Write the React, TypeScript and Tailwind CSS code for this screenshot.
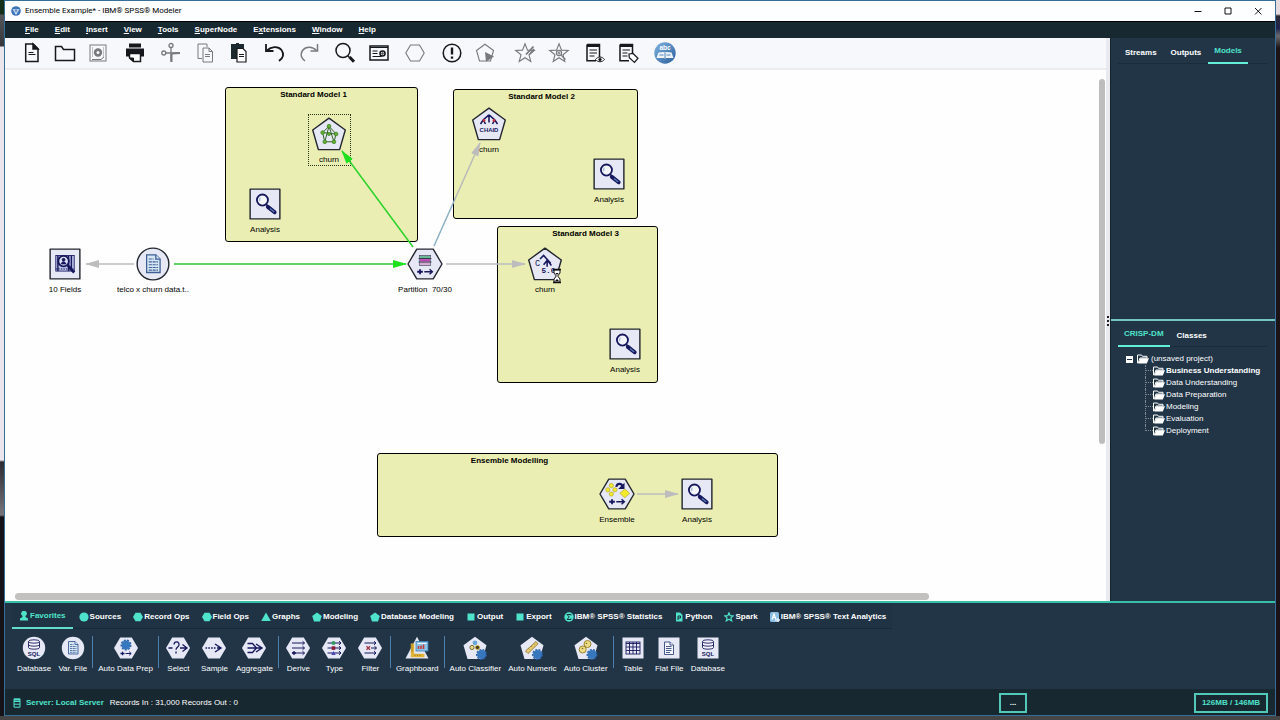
import React from "react";

type Kids = { children?: React.ReactNode };

/* ---------- toolbar icons ---------- */

function Tool({ children }: Kids) {
  return (
    <svg viewBox="0 0 24 24" className="size-6" fill="none" stroke="#15181c" strokeWidth="1.5">
      {children}
    </svg>
  );
}

const gray = "#77797d";
const star = "M12 2.8l2.5 6.3 6.8.4-5.3 4.2 1.8 6.8-5.8-3.8-5.8 3.8L8 13.7 2.700 9.500l6.800-.4z";

const tools: { name: string; gap: string; icon: React.ReactNode }[] = [
  {
    name: "New stream",
    gap: "ml-0",
    icon: (
      <Tool>
        <path d="M5.700 3h7.500l4.800 4.800V20.500H5.700z" />
        <path d="M13 3v5h5z" fill="#15181c" />
        <path d="M8.500 11.500h5M8.500 13.500h7" strokeWidth="1" />
      </Tool>
    ),
  },
  {
    name: "Open",
    gap: "ml-0",
    icon: (
      <Tool>
        <path d="M2.500 19.500V5.500h6l2 3h11v11z" />
      </Tool>
    ),
  },
  {
    name: "Save",
    gap: "ml-0",
    icon: (
      <Tool>
        <rect x="4" y="4" width="16" height="16" stroke={gray} strokeWidth="1" />
        <path d="M6 18.500h9l3-2.500" stroke={gray} strokeWidth="1" />
        <circle cx="12" cy="11.500" r="4.200" fill={gray} stroke="none" />
        <circle cx="12" cy="11.500" r="1.500" fill="#f7f8fa" stroke="none" />
        <path d="M6.500 6v10M17.500 6v10" stroke="#c0c1c4" strokeWidth="1" />
      </Tool>
    ),
  },
  {
    name: "Print",
    gap: "ml-1",
    icon: (
      <Tool>
        <path d="M6 2.500h12v4H6zM3 7.500h18v8h-3v-3H6v3H3z" fill="#15181c" stroke="none" />
        <path d="M6.500 12.500h11v8h-7l-4-3.500z" fill="#fff" />
        <path d="M6.500 17h4v3.500z" fill="#15181c" strokeWidth="1" />
      </Tool>
    ),
  },
  {
    name: "Cut",
    gap: "ml-[3px]",
    icon: (
      <Tool>
        <g stroke={gray} strokeWidth="1.300">
          <circle cx="12" cy="4.500" r="2" />
          <circle cx="4.800" cy="12" r="2" />
          <path d="M12 6.500v14M6.800 12H21" />
          <path d="M13 12.500l8-.5M12.500 13v8" strokeWidth="2" />
        </g>
      </Tool>
    ),
  },
  {
    name: "Copy",
    gap: "ml-px",
    icon: (
      <Tool>
        <g stroke={gray} strokeWidth="1">
          <path d="M9 17.500H5V3h9v3" />
          <path d="M10 7h6l3.500 3.500V21H10z" />
          <path d="M16 7v3.500h3.500M12 13.500h5M12 15.500h5" />
        </g>
      </Tool>
    ),
  },
  {
    name: "Paste",
    gap: "ml-px",
    icon: (
      <Tool>
        <path d="M4 3h5V2h3v1h5v15H4z" fill="#1b2a2e" stroke="none" />
        <path d="M10 7.500h6l3 3V21h-9z" fill="#fff" strokeWidth="1.200" />
        <path d="M12 13.500h5M12 15.500h5" strokeWidth="1" />
      </Tool>
    ),
  },
  {
    name: "Undo",
    gap: "ml-[3px]",
    icon: (
      <Tool>
        <path d="M3 3v7h7.500" strokeWidth="1.800" />
        <path d="M4 9.500C8 5.500 15 4.500 18.500 9c2.800 4 1.500 8-2.500 11" strokeWidth="1.800" />
      </Tool>
    ),
  },
  {
    name: "Redo",
    gap: "ml-px",
    icon: (
      <Tool>
        <g stroke={gray} strokeWidth="1.500">
          <path d="M20.500 3v7h-7" />
          <path d="M19.500 9.500C15.500 5.500 9 5 5.500 9.500c-2.500 4-1.500 7.500 2.500 10.500" />
        </g>
      </Tool>
    ),
  },
  {
    name: "Search",
    gap: "ml-[3px]",
    icon: (
      <Tool>
        <circle cx="10" cy="9.500" r="7" />
        <path d="M14.800 14.800l1.700 1.700" />
        <path d="M16.500 16l4.500 4.800" strokeWidth="3" />
      </Tool>
    ),
  },
  {
    name: "Stream properties",
    gap: "ml-px",
    icon: (
      <Tool>
        <rect x="3" y="5" width="18" height="14" />
        <path d="M3 6.500h18" strokeWidth="1" />
        <path d="M5.500 10h5M5.500 12.500h5M5.500 15.500h9" strokeWidth="1" />
        <circle cx="15.500" cy="12.500" r="2.500" strokeWidth="1.600" />
        <circle cx="15.500" cy="12.500" r=".7" strokeWidth="1" />
      </Tool>
    ),
  },
  {
    name: "Stop",
    gap: "ml-[3px]",
    icon: (
      <Tool>
        <path d="M7.500 4h9l4.700 8-4.700 8h-9l-4.700-8z" stroke={gray} strokeWidth="1.100" />
      </Tool>
    ),
  },
  {
    name: "Run",
    gap: "ml-1",
    icon: (
      <Tool>
        <circle cx="12" cy="12" r="8.800" />
        <path d="M12 6.500v7" strokeWidth="2.400" />
        <path d="M12 15.500v2.200" strokeWidth="2.400" />
      </Tool>
    ),
  },
  {
    name: "Run selection",
    gap: "ml-0",
    icon: (
      <Tool>
        <path d="M12 3.200l8.500 6.300-3 10.500H6.500l-3-10.500z" stroke={gray} strokeWidth="1.100" />
        <path d="M12 11l9 4.500-8 5.200z" fill={gray} stroke="none" />
      </Tool>
    ),
  },
  {
    name: "Find node",
    gap: "ml-[7px]",
    icon: (
      <Tool>
        <path d={star} stroke={gray} strokeWidth="1.100" />
        <path d="M13 13.500l7.500-8M17 13l4-5" stroke={gray} strokeWidth="1.800" />
      </Tool>
    ),
  },
  {
    name: "Search nodes",
    gap: "ml-px",
    icon: (
      <Tool>
        <path d={star} stroke={gray} strokeWidth="1.100" />
        <circle cx="12" cy="12" r="2.600" stroke={gray} strokeWidth="1.100" />
        <path d="M10.500 12h3M12 10.500v3M14 14l4.500 4.500" stroke={gray} strokeWidth="1.200" />
      </Tool>
    ),
  },
  {
    name: "Preview output",
    gap: "ml-[3px]",
    icon: (
      <Tool>
        <path d="M4 3.500h12.500V16M4 3.500v16.200h9" />
        <path d="M4 4.500h12.500" strokeWidth="3" />
        <path d="M6.500 9h7.500M6.500 12h7.500M6.500 15h5" strokeWidth="1.200" />
        <path d="M12.500 18.500c2.500-3.300 6.500-3.300 9 0-2.500 3-6.500 3-9 0z" fill="#fff" strokeWidth="1" />
        <circle cx="17" cy="18.500" r="1.300" fill="#15181c" strokeWidth=".8" />
      </Tool>
    ),
  },
  {
    name: "Annotate",
    gap: "ml-0",
    icon: (
      <Tool>
        <path d="M4 3.500h12.500V12M4 3.500v16.200h9" />
        <path d="M4 4.500h12.500" strokeWidth="3" />
        <path d="M6.500 9h7.500M6.500 12h5M6.500 15h5" strokeWidth="1.200" />
        <path d="M13 13l4-.5 5 4.700-3.500 4.300-5.200-4.800z" fill="#fff" strokeWidth="1.200" />
      </Tool>
    ),
  },
  {
    name: "Text analytics",
    gap: "ml-1",
    icon: (
      <svg viewBox="0 0 24 24" className="size-6">
        <defs>
          <linearGradient id="ball" x1="0" y1="0" x2="1" y2="1">
            <stop offset="0" stopColor="#7db2e0" />
            <stop offset="1" stopColor="#2c5f9c" />
          </linearGradient>
        </defs>
        <circle cx="12" cy="12" r="10.700" fill="url(#ball)" />
        <text x="12" y="9" fontSize="6.500" fontWeight="700" textAnchor="middle" fill="#fff" fontFamily="Liberation Sans, sans-serif">
          abc
        </text>
        <path d="M5.500 11.500l5.500-.5 1 .8 1-.8 5.500.5 2 5.500H12.500l-.5 1-.5-1H3.500z" fill="#eef4fa" />
        <path d="M12 12v5M6.500 14h4M13.500 14h4" stroke="#4479b4" strokeWidth=".9" />
      </svg>
    ),
  },
];

/* ---------- node glyphs, drawn in a 24 × 24 box ---------- */

const navy = "#17175e";

type ShapeKind = "circle" | "hex" | "pent" | "square" | "tri";

function Outline({ kind, edge }: { kind: ShapeKind; edge: string }) {
  const p = { fill: "#e6e9f5", stroke: edge, strokeWidth: 1, strokeLinejoin: "round" as const };
  switch (kind) {
    case "circle":
      return <circle cx="12" cy="12" r="11.200" {...p} />;
    case "hex":
      return <path d="M6.200 1.500h11.600L24 12l-6.200 10.500H6.200L0 12z" {...p} />;
    case "pent":
      return <path d="M12 .8l11.500 8.400L19.500 23h-15L.5 9.200z" {...p} />;
    case "tri":
      return <path d="M12 .8L23.500 22.500H.5z" {...p} />;
    default:
      return <rect x="1.500" y="1.500" width="21" height="21" {...p} />;
  }
}

const magnifier = (
  <g fill="none">
    <path d="M14 14l4.800 3.800" stroke="#17175e" strokeWidth="2.800" strokeLinecap="round" />
    <path d="M15.500 15.200l3 2.500" stroke="#5a7fb5" strokeWidth=".9" />
    <path d="M12.800 12l1.500 1.700" stroke="#17175e" strokeWidth="1" />
    <circle cx="10.200" cy="9.200" r="3.900" fill="#f4f6fc" stroke="#17175e" strokeWidth="1.300" />
    <path d="M8.800 7.500c-.6.700-.8 1.500-.6 2.500" stroke="#a9bcd8" strokeWidth="1" />
  </g>
);

const page = (
  <g fill="#d7e6f6" stroke="#3c5f96" strokeWidth=".9">
    <path d="M7.500 5.500h6.500l3 3V18H7.500z" />
    <path d="M14 5.500v3h3" />
    <path d="M9 8.500h3.500M9 10.500h6.500M9 12.500h6.500M9 14.500h6.500M9 16.300h6.500" strokeWidth=".8" strokeDasharray="2.200 .5" />
  </g>
);

const database = (
  <g fill="#f3f4fb" stroke={navy} strokeWidth=".9">
    <path d="M6.500 5.500v6c0 2.200 11 2.200 11 0v-6" />
    <ellipse cx="12" cy="5.500" rx="5.500" ry="1.700" />
    <path d="M6.500 8.500c0 2.200 11 2.200 11 0" fill="none" />
    <text x="12" y="19.800" fontSize="6" fontWeight="700" textAnchor="middle" fill={navy} stroke="none" fontFamily="Liberation Sans, sans-serif">
      SQL
    </text>
  </g>
);

function Gear({ x, y, r }: { x: number; y: number; r: number }) {
  return (
    <g>
      <circle cx={x} cy={y} r={r} fill="none" stroke="#2a5fa4" strokeWidth="1.400" strokeDasharray="2 1.300" />
      <circle cx={x} cy={y} r={r - 0.3} fill="#3777bd" />
    </g>
  );
}

function Arrow({ x1, x2, y }: { x1: number; x2: number; y: number }) {
  return (
    <path d={`M${x1} ${y}H${x2}M${x2 - 2} ${y - 1.8}L${x2} ${y}l-2 1.800`} fill="none" stroke={navy} strokeWidth="1" />
  );
}

const plusArrow = (
  <g stroke={navy} fill="none">
    <path d="M6.500 17.500h4M8.500 15.700v3.600" strokeWidth="1.300" />
    <path d="M11.500 17.500h5.500M15.200 15.700l2 1.800-2 1.800" strokeWidth="1" />
  </g>
);

const glyphs: Record<string, React.ReactNode> = {
  magnifier,
  page,
  database,
  autoPrep: (
    <>
      <Gear x={12} y={9} r={4.800} />
      {plusArrow}
    </>
  ),
  select: (
    <g stroke={navy} fill="none" strokeWidth="1.300">
      <path d="M2.500 12h4M14 12h6.500M16.500 8.500l4.500 3.500-4.500 3.500" />
      <path d="M8 8.500C8.500 4.800 13.500 5.300 13 9c-.3 2-3 2-3 4.800M10 15.500v2" />
    </g>
  ),
  sample: (
    <g stroke={navy} fill="none" strokeWidth="1.400">
      <path d="M3.500 12h11" strokeDasharray="1.600 1.200" />
      <path d="M13 8l6 4-6 4M15 12h4" />
    </g>
  ),
  aggregate: (
    <g stroke={navy} fill="none" strokeWidth="1.400">
      <path d="M5.500 7.500h5l4 4.500-4 4.500h-5M5.500 12h14M14 8l6 4-6 4" />
    </g>
  ),
  derive: (
    <>
      <Arrow x1={6} x2={18.500} y={7} />
      <Arrow x1={6} x2={18.500} y={12} />
      <Arrow x1={6} x2={18.500} y={17} />
      <path d="M6 17h4M8 15v4" stroke={navy} strokeWidth="1.300" />
    </>
  ),
  type: (
    <>
      <Arrow x1={5.500} x2={19} y={7} />
      <Arrow x1={5.500} x2={19} y={12} />
      <Arrow x1={5.500} x2={19} y={17} />
      <circle cx="11.500" cy="7" r="2" fill="#2f9c62" />
      <rect x="9.700" y="10.300" width="3.600" height="3.600" fill="#8d1c3c" />
      <path d="M11.500 15l2.200 4H9.300z" fill="#4a43b6" />
    </>
  ),
  filter: (
    <>
      <Arrow x1={6.500} x2={18} y={7} />
      <Arrow x1={13} x2={18.500} y={12} />
      <Arrow x1={6.500} x2={18} y={17} />
      <path d="M8.500 10.200l3.500 3.600M12 10.200l-3.500 3.600" stroke="#a2384c" strokeWidth="1.400" />
    </>
  ),
  graph: (
    <>
      <path d="M7.500 7.500v12h12" fill="none" stroke="#e0b53a" strokeWidth="3.400" />
      <path d="M6.300 9h1.700M6.300 11h1.700M6.300 13h1.700M6.300 15h1.700M10 20v-1.500M12.500 20v-1.500M15 20v-1.500" stroke="#8b6410" strokeWidth=".7" />
      <rect x="11" y="5.500" width="12" height="9.500" fill="#8ac3ea" stroke="#3e7eb4" strokeWidth=".8" />
      <path d="M13.500 13v-3M16 13V9.500M18.500 13V8.500" stroke="#c33b3d" strokeWidth="1.600" />
      <path d="M12.500 7.500h9" stroke="#e9f3fb" strokeWidth="1" />
    </>
  ),
  classifier: (
    <>
      <circle cx="12" cy="6.800" r="2.400" fill="#69a6db" />
      <circle cx="9" cy="11.500" r="2.100" fill="#eedd86" stroke="#5a4c20" strokeWidth=".8" />
      <circle cx="14.500" cy="11.500" r="2.100" fill="#3b3524" stroke="#d8b83b" strokeWidth=".9" />
      <Gear x={18.500} y={18.500} r={4.800} />
    </>
  ),
  numeric: (
    <>
      <path d="M5.500 15l10.500-9.500 2 2.300L8 17.500z" fill="#e8cc73" stroke="#84691f" strokeWidth=".8" />
      <path d="M8.500 12.500l1 1M11.200 10.200l1 1M14 7.700l1 1" stroke="#84691f" strokeWidth=".7" />
      <Gear x={17.500} y={18.500} r={4.800} />
    </>
  ),
  cluster: (
    <>
      <g fill="#eedd86" stroke="#9b8430" strokeWidth="1">
        <circle cx="13.500" cy="8" r="3.500" />
        <circle cx="8.700" cy="13.500" r="3.500" />
      </g>
      <circle cx="12.500" cy="7.500" r=".8" fill="#84691f" />
      <circle cx="8.500" cy="12.500" r=".8" fill="#84691f" />
      <Gear x={18} y={18.500} r={4.800} />
    </>
  ),
  table: (
    <g fill="none" stroke={navy} strokeWidth=".9">
      <rect x="5" y="6" width="14" height="12" />
      <path d="M5 7.500h14M5 11h14M5 14.500h14M8.500 6v12M12 6v12M15.500 6v12" />
    </g>
  ),
  file: (
    <g fill="#f4f6fc" stroke="#34477f" strokeWidth=".9">
      <path d="M7.500 6H13l3.500 3v9.500h-9z" />
      <path d="M13 6v3h3.500M9 10.500h5.500M9 12.500h5.500M9 14.500h5.500M9 16.500h4" />
    </g>
  ),
  fields: (
    <g fill="none" stroke={navy}>
      <rect x="5.500" y="6" width="13" height="11" fill="#b9c0e6" strokeWidth=".6" />
      <path d="M7 6v11M14.500 6v11M16.500 6v11" strokeWidth="1" />
      <path d="M5.500 15.500h13" strokeWidth=".7" strokeDasharray="1 .8" />
      <circle cx="11" cy="10" r="3.700" fill="#dfe3f5" strokeWidth="1.300" />
      <circle cx="11" cy="9" r="1" fill="#17175e" strokeWidth=".6" />
      <path d="M9.300 12c.3-2 3-2 3.400 0z" fill="#17175e" strokeWidth=".5" />
      <path d="M14 13l4.500 5" strokeWidth="2" />
    </g>
  ),
  partition: (
    <>
      <path d="M8.500 7h7" stroke="#67b796" strokeWidth="1.800" />
      <path d="M8.500 9.400h7" stroke="#c93fb8" strokeWidth="1.600" />
      <path d="M8.500 11.800h7" stroke="#d9a2cf" strokeWidth="1.600" />
      <path d="M7.500 8.200h9M7.500 10.600h9" stroke="#22263c" strokeWidth=".7" />
      <rect x="8" y="6" width="8" height="7" fill="none" stroke="#444a62" strokeWidth=".5" />
      {plusArrow}
    </>
  ),
  net: (
    <>
      <path
        d="M12 6.500L7.500 11l1.500 6.500h6.500l1.500-5.500zM12 6.500L9 17.500M12 6.500l3.500 11M7.500 11l9.500 1"
        fill="none"
        stroke="#2f5f23"
        strokeWidth=".7"
      />
      <g fill="#62b032" stroke="#3b7d22" strokeWidth=".5">
        <circle cx="12" cy="6.500" r="1.300" />
        <circle cx="7.500" cy="11" r="1.300" />
        <circle cx="17" cy="12" r="1.300" />
        <circle cx="9" cy="17.500" r="1.300" />
        <circle cx="15.500" cy="17.500" r="1.300" />
        <circle cx="12" cy="12" r="1.100" />
      </g>
    </>
  ),
  chaid: (
    <>
      <path d="M12 5.500L8 9l-2 3M12 5.500L16 9l2 3M12 5.500V11M8 9l1.500 3M16 9l-1.500 3" fill="none" stroke={navy} strokeWidth="1.100" />
      <circle cx="8.500" cy="9.500" r="1" fill="#c73442" />
      <circle cx="15.500" cy="9.500" r="1" fill="#c73442" />
      <text x="12" y="17.500" fontSize="4.200" fontWeight="700" textAnchor="middle" fill={navy} fontFamily="Liberation Sans, sans-serif">
        CHAID
      </text>
    </>
  ),
  c5: (
    <>
      <path d="M8.500 8.500l2.500-2.500 5 5.500M13.500 9v5M13.500 9.500l-2.500 3M13.500 9l3 4" fill="none" stroke={navy} strokeWidth="1.100" />
      <text x="5" y="13.500" fontSize="6" fill={navy} fontFamily="Liberation Mono, monospace">
        C
      </text>
      <text x="9.500" y="18.500" fontSize="5.500" fontWeight="700" fill={navy} fontFamily="Liberation Mono, monospace">
        5.0
      </text>
    </>
  ),
  ensemble: (
    <>
      <g fill="#f4ea2d" stroke="#a99c1b" strokeWidth=".4">
        <circle cx="8" cy="6" r="1.500" />
        <circle cx="5.500" cy="9" r="1.500" />
        <circle cx="10.500" cy="9" r="1.500" />
        <circle cx="8" cy="12" r="1.500" />
        <path d="M17.500 8.500l3.500 3-3.500 3.200-3.500-3.200z" />
      </g>
      <path d="M11.500 7c.5-3 4-2.800 4.500 0" fill="none" stroke={navy} strokeWidth="1.500" />
      <path d="M17.300 4v4.500h-4.500z" fill={navy} />
      {plusArrow}
    </>
  ),
};

function NodeIcon({ kind, glyph, size, edge }: { kind: ShapeKind; glyph: string; size: string; edge: string }) {
  return (
    <svg viewBox="0 0 24 24" className={`shrink-0 overflow-visible ${size}`} aria-hidden="true">
      <Outline kind={kind} edge={edge} />
      {glyphs[glyph]}
    </svg>
  );
}

/* ---------- stream canvas ---------- */

const groups = [
  { title: "Standard Model 1", box: "left-[220px] top-[17px] h-[155px] w-[193px] pr-4" },
  { title: "Standard Model 2", box: "left-[448px] top-[19px] h-[130px] w-[185px] pr-2" },
  { title: "Standard Model 3", box: "left-[492px] top-[156px] h-[157px] w-[161px] pl-4" },
  { title: "Ensemble Modelling", box: "left-[372px] top-[383px] h-[84px] w-[401px] pr-[136px]" },
];

const nodes: { label: string; kind: ShapeKind; glyph: string; at: string }[] = [
  { label: "10 Fields", kind: "square", glyph: "fields", at: "left-[20px] top-[177px]" },
  { label: "telco x churn data.t..", kind: "circle", glyph: "page", at: "left-[108px] top-[177px]" },
  { label: "Partition  70/30", kind: "hex", glyph: "partition", at: "left-[380px] top-[177px]" },
  { label: "churn", kind: "pent", glyph: "net", at: "left-[284px] top-[47px]" },
  { label: "Analysis", kind: "square", glyph: "magnifier", at: "left-[220px] top-[117px]" },
  { label: "churn", kind: "pent", glyph: "chaid", at: "left-[444px] top-[37px]" },
  { label: "Analysis", kind: "square", glyph: "magnifier", at: "left-[564px] top-[87px]" },
  { label: "churn", kind: "pent", glyph: "c5", at: "left-[500px] top-[177px]" },
  { label: "Analysis", kind: "square", glyph: "magnifier", at: "left-[580px] top-[257px]" },
  { label: "Ensemble", kind: "hex", glyph: "ensemble", at: "left-[572px] top-[407px]" },
  { label: "Analysis", kind: "square", glyph: "magnifier", at: "left-[652px] top-[407px]" },
];

function Links() {
  return (
    <svg className="pointer-events-none absolute inset-0 size-full" fill="none" aria-hidden="true">
      <defs>
        <marker id="gh" markerUnits="userSpaceOnUse" markerWidth="14" markerHeight="10" refX="13" refY="5" orient="auto">
          <path d="M0 1l14 4-14 4z" fill="#1fe01f" />
        </marker>
        <marker id="ah" markerUnits="userSpaceOnUse" markerWidth="14" markerHeight="10" refX="13" refY="5" orient="auto">
          <path d="M0 1l14 4-14 4z" fill="#bdbdbd" />
        </marker>
        <linearGradient id="fade" gradientUnits="userSpaceOnUse" x1="429" y1="176" x2="475" y2="73">
          <stop offset="0.400" stopColor="#8bb0c6" />
          <stop offset="0.500" stopColor="#b9bab8" />
        </linearGradient>
      </defs>
      <g strokeWidth="1.500">
        <path d="M169 194H401" stroke="#2bc936" markerEnd="url(#gh)" />
        <path d="M408 177L337 81" stroke="#2bd32b" markerEnd="url(#gh)" />
        <path d="M129 194H81" stroke="#bcbcc0" markerEnd="url(#ah)" />
        <path d="M429 176L475 73" stroke="url(#fade)" markerEnd="url(#ah)" />
        <path d="M441 194H520" stroke="#b9bbc0" markerEnd="url(#ah)" />
        <path d="M632 424H673" stroke="#bdbdbd" markerEnd="url(#ah)" />
      </g>
    </svg>
  );
}

function Canvas() {
  return (
    <div className="relative min-w-0 flex-1 overflow-hidden">
      {groups.map((g) => (
        <section key={g.title} className={`absolute rounded-[3px] border border-black bg-[#ebeeb2] pt-0.5 text-center font-bold ${g.box}`}>
          {g.title}
        </section>
      ))}
      {nodes.map((n) => (
        <div key={n.at} className={`absolute flex w-20 flex-col items-center gap-1 whitespace-pre ${n.at}`}>
          <NodeIcon kind={n.kind} glyph={n.glyph} size="size-[34px]" edge="#22262e" />
          <span>{n.label}</span>
        </div>
      ))}
      <div className="absolute left-[303px] top-11 h-[52px] w-[43px] border border-dotted border-[#26351a]" />
      <Links />
      <svg viewBox="0 0 10 16" className="absolute left-[547px] top-[198px] h-4 w-2.5" fill="#fff" stroke="#111" aria-hidden="true">
        <path d="M2 2v3l2.300 3L2 11v3h6v-3L5.700 8 8 5V2z" strokeWidth="1" />
        <path d="M1 1.500h8M1 14.500h8" strokeWidth="1.500" />
        <path d="M3.300 5h3.400L5 7zM3 13l2-2 2 2z" fill="#111" stroke="none" />
      </svg>
    </div>
  );
}

/* ---------- palette ---------- */

const teal = "#4fe3cb";

const tabMarks: Record<string, React.ReactNode> = {
  person: <path d="M5 0a2.500 2.500 0 0 1 1.500 4.700V6L9 7.500V9.500H1V7.500L3.500 6V4.700A2.500 2.500 0 0 1 5 0z" />,
  circle: <circle cx="5" cy="5" r="4.600" />,
  hex: <path d="M2.500 .7h5L10 5 7.500 9.300h-5L0 5z" />,
  tri: <path d="M5 .5L9.800 9H.2z" />,
  pent: <path d="M5 .5l4.800 3.600L8 9.500H2L.2 4.100z" />,
  square: <rect x="1.500" y="1.500" width="7" height="7" />,
  sigma: (
    <>
      <circle cx="5" cy="5" r="4.700" />
      <path d="M7 3.500V2.500H3L5.200 5 3 7.500h4v-1" fill="none" stroke="#1c3040" strokeWidth="1" />
    </>
  ),
  python: (
    <>
      <path d="M2 .5h4l2.500 2.500v6.500H2z" />
      <path d="M4 8V4h2.500v2H4" fill="none" stroke="#1c3040" strokeWidth="1" />
    </>
  ),
  spark: <path d="M5 .8l1.200 2.900 3 .2-2.300 2 .8 3L5 7.300 2.300 8.900l.8-3-2.300-2 3-.2z" fill="none" stroke={teal} strokeWidth="1.200" />,
  text: (
    <>
      <rect x="0" y="0" width="9" height="10" rx="1.500" fill="#8bbfe6" />
      <path d="M2 7.500L4 2l2 5.500M2.800 5.500h2.500" fill="none" stroke="#fff" strokeWidth="1.200" />
      <path d="M5 8h5M8 6v4" stroke="#e5edf6" strokeWidth="1.500" />
    </>
  ),
};

const paletteTabs = [
  ["Favorites", "person"],
  ["Sources", "circle"],
  ["Record Ops", "hex"],
  ["Field Ops", "hex"],
  ["Graphs", "tri"],
  ["Modeling", "pent"],
  ["Database Modeling", "pent"],
  ["Output", "square"],
  ["Export", "square"],
  ["IBM® SPSS® Statistics", "sigma"],
  ["Python", "python"],
  ["Spark", "spark"],
  ["IBM® SPSS® Text Analytics", "text"],
];

const palette: [string, ShapeKind, string][][] = [
  [
    ["Database", "circle", "database"],
    ["Var. File", "circle", "page"],
  ],
  [["Auto Data Prep", "hex", "autoPrep"]],
  [
    ["Select", "hex", "select"],
    ["Sample", "hex", "sample"],
    ["Aggregate", "hex", "aggregate"],
  ],
  [
    ["Derive", "hex", "derive"],
    ["Type", "hex", "type"],
    ["Filter", "hex", "filter"],
  ],
  [["Graphboard", "tri", "graph"]],
  [
    ["Auto Classifier", "pent", "classifier"],
    ["Auto Numeric", "pent", "numeric"],
    ["Auto Cluster", "pent", "cluster"],
  ],
  [
    ["Table", "square", "table"],
    ["Flat File", "square", "file"],
    ["Database", "square", "database"],
  ],
];

function Palette() {
  return (
    <div className="border-t-2 border-[#36bfa9] bg-[#213547] text-white">
      <div role="tablist" className="ml-[7px] flex h-[26px] w-fit border-b border-[#182937] bg-[#1f3344]">
        {paletteTabs.map(([name, mark], i) => (
          <button
            key={name}
            role="tab"
            aria-selected={i === 0}
            className={
              i === 0
                ? "flex h-[26px] items-center gap-px whitespace-nowrap border-b-2 border-[#62dccc] px-[7px] pt-0.5 font-bold text-[#4fe3cb]"
                : "flex items-center gap-px whitespace-nowrap px-1.5 pt-[3px] font-bold"
            }
          >
            <svg viewBox="0 0 10 10" className="size-2.5 shrink-0" fill={teal} aria-hidden="true">
              {tabMarks[mark]}
            </svg>
            {name}
          </button>
        ))}
      </div>
      <div className="ml-[9px] flex h-[60px] gap-px pt-[7px]">
        {palette.map((group, g) => (
          <React.Fragment key={g}>
            {g > 0 && <div className="mx-px h-8 w-px bg-[#4d80ac]" />}
            {group.map(([name, kind, glyph]) => (
              <button key={name} className="flex min-w-[35px] flex-col items-center gap-1 self-start whitespace-nowrap px-[3px]">
                <NodeIcon kind={kind} glyph={glyph} size="size-6" edge="none" />
                <span>{name}</span>
              </button>
            ))}
          </React.Fragment>
        ))}
      </div>
    </div>
  );
}

/* ---------- side managers ---------- */

function SideTabs({ names, active }: { names: string[]; active: string }) {
  return (
    <div role="tablist" className="mx-[7px] flex h-[26px] border-b border-[#1a2b3a]">
      {names.map((n) => (
        <button
          key={n}
          role="tab"
          aria-selected={n === active}
          className={
            n === active
              ? "h-[26px] border-b-2 border-[#62eed8] px-1.5 pt-0.5 font-bold text-[#4fe3cb]"
              : "px-[7px] pt-1 font-bold text-white"
          }
        >
          {n}
        </button>
      ))}
    </div>
  );
}

function Folder() {
  return (
    <svg viewBox="0 0 12 10" className="h-2.5 w-3 shrink-0" fill="#fff" aria-hidden="true">
      <path d="M.5 9V1h4l1 1.300H10V4H3L1.200 9z" fill="#213547" stroke="#fff" strokeWidth="1" />
      <path d="M3.500 4.200H12L9.800 9.500H1.300z" />
    </svg>
  );
}

const phases = ["Business Understanding", "Data Understanding", "Data Preparation", "Modeling", "Evaluation", "Deployment"];

function SidePanel() {
  return (
    <aside className="flex w-[165px] shrink-0 flex-col border-l border-[#16222c] bg-[#213547] text-white">
      <div className="h-[283px] border-b-2 border-[#74c4c4]">
        <SideTabs names={["Streams", "Outputs", "Models"]} active="Models" />
      </div>
      <div className="flex-1">
        <SideTabs names={["CRISP-DM", "Classes"]} active="CRISP-DM" />
        <div className="pl-[15px] pt-1.5">
          <div className="flex h-3 items-center">
            <button aria-label="Collapse project" className="flex size-[7px] items-center justify-center bg-white">
              <span className="h-px w-[5px] bg-[#213547]" />
            </button>
            <span className="ml-1 flex items-center gap-0.5">
              <Folder />
              (unsaved project)
            </span>
          </div>
          <ul className="ml-[19px]">
            {phases.map((p, i) => (
              <li key={p} className="flex h-3 items-center">
                <span
                  className={
                    i === phases.length - 1
                      ? "h-1.5 w-2 self-start border-b border-l border-dotted border-[#7f8d99]"
                      : "h-3 w-2 border-l border-dotted border-[#7f8d99]"
                  }
                >
                  {i < phases.length - 1 && <span className="block h-1.5 border-b border-dotted border-[#7f8d99]" />}
                </span>
                <Folder />
                <span className={i === 0 ? "ml-px whitespace-nowrap font-bold" : "ml-px whitespace-nowrap"}>{p}</span>
              </li>
            ))}
          </ul>
        </div>
      </div>
    </aside>
  );
}

/* ---------- window ---------- */

const menus: [string, string, string][] = [
  ["", "F", "ile"],
  ["", "E", "dit"],
  ["", "I", "nsert"],
  ["", "V", "iew"],
  ["", "T", "ools"],
  ["", "S", "uperNode"],
  ["E", "x", "tensions"],
  ["", "W", "indow"],
  ["", "H", "elp"],
];

export default function App() {
  return (
    <div className="flex min-h-screen flex-col bg-[#454545] font-['Liberation_Sans',Arial,sans-serif] text-[8px] leading-[10px] text-black">
      <div className="flex flex-1">
        <div className="w-1 shrink-0 bg-[linear-gradient(to_bottom,#12301a_0px,#12301a_14px,#55565a_15px,#35363a_46px,#ebe6ec_47px,#ebe6ec_460px,#2c2b2f_462px,#77757a_515px,#151318_517px,#151318_100%)]" />
        <div className="flex min-w-0 flex-1 flex-col border border-[#356f98]">
          <header className="flex h-5 items-center bg-[#fdfeff] pl-[6px]">
            <svg viewBox="0 0 10 10" className="size-2.5" aria-hidden="true">
              <circle cx="5" cy="5" r="4.800" fill="#3c74b8" />
              <path d="M2 3.500h6L5 8.500zM3.500 3.500L5 8l1.500-4.500" fill="#9fc5ec" stroke="#e6f0fa" strokeWidth=".5" />
            </svg>
            <h1 className="ml-1 flex-1 font-[Roboto,sans-serif] text-[8px]">Ensemble Example* - IBM® SPSS® Modeler</h1>
            <div className="flex w-[82px] justify-between pr-3">
              {[
                ["Minimize", "M1.500 5.500h7"],
                ["Maximize", "M2 2h6v6H2z"],
                ["Close", "M2 2l6.500 6.500M8.500 2L2 8.500"],
              ].map(([name, d]) => (
                <button key={name} aria-label={name}>
                  <svg viewBox="0 0 10 10" className="size-2.5" fill="none" stroke="#111" strokeWidth="1">
                    <path d={d} />
                  </svg>
                </button>
              ))}
            </div>
          </header>
          <nav className="flex h-[17px] items-center gap-4 border-t border-black bg-[#182831] pl-5 font-bold text-white">
            {menus.map(([a, u, b]) => (
              <button key={u + b}>
                {a}
                <u>{u}</u>
                {b}
              </button>
            ))}
          </nav>
          <div className="flex flex-1">
            <main className="flex min-w-0 flex-1 flex-col bg-[#fefefe]">
              <div className="flex h-8 shrink-0 items-center border-b-2 border-[#ececf0] bg-[#f7f8fc] pl-[10px]">
                {tools.map((t) => (
                  <button key={t.name} aria-label={t.name} className={`flex w-[33px] shrink-0 justify-center ${t.gap}`}>
                    {t.icon}
                  </button>
                ))}
              </div>
              <div className="flex flex-1">
                <Canvas />
                <div className="flex w-2 flex-col pt-[9px]">
                  <div className="ml-px h-[71%] w-1.5 rounded-full bg-[#bdbdbd]" />
                </div>
              </div>
              <div className="h-2 shrink-0 pl-[10px] pr-4">
                <div className="h-[7px] w-[85%] rounded-full bg-[#c2c1bf]" />
              </div>
            </main>
            <div className="flex w-1 shrink-0 flex-col items-center bg-[#e9eaf0]">
              <svg viewBox="0 0 4 10" className="mt-[278px] h-2.5 w-1" fill="#222" aria-hidden="true">
                <path d="M1 0h2v2H1zM1 4h2v2H1zM1 8h2v2H1z" />
              </svg>
            </div>
            <SidePanel />
          </div>
          <Palette />
          <footer className="flex h-[26px] items-center bg-[#182831] pl-2 pr-[7px] pt-px text-white">
            <svg viewBox="0 0 8 10" className="h-2.5 w-2" fill="none" stroke={teal} aria-hidden="true">
              <path d="M1 .8h6v8.400H1zM1 3.500h6M1 6.200h6" />
              <path d="M1 1.800h6" strokeWidth="1.500" />
            </svg>
            <span className="ml-[5px] font-bold text-[#4fe3cb]">Server: Local Server</span>
            <span className="ml-[6px] flex-1">Records In : 31,000 Records Out : 0</span>
            <button className="h-5 w-7 border-2 border-[#52c9b8] font-bold">...</button>
            <button className="ml-[167px] h-5 w-[74px] border-2 border-[#52c9b8] font-bold text-[#4fe3cb]">126MB / 146MB</button>
          </footer>
        </div>
        <div className="w-1 shrink-0 bg-[linear-gradient(to_bottom,#e5dade_0px,#e5dade_14px,#2b2b33_16px,#1f2350_28px,#6a6a6e_36px,#1d1418_48px,#1b1218_100%)]" />
      </div>
      <div className="h-1 shrink-0" />
    </div>
  );
}
